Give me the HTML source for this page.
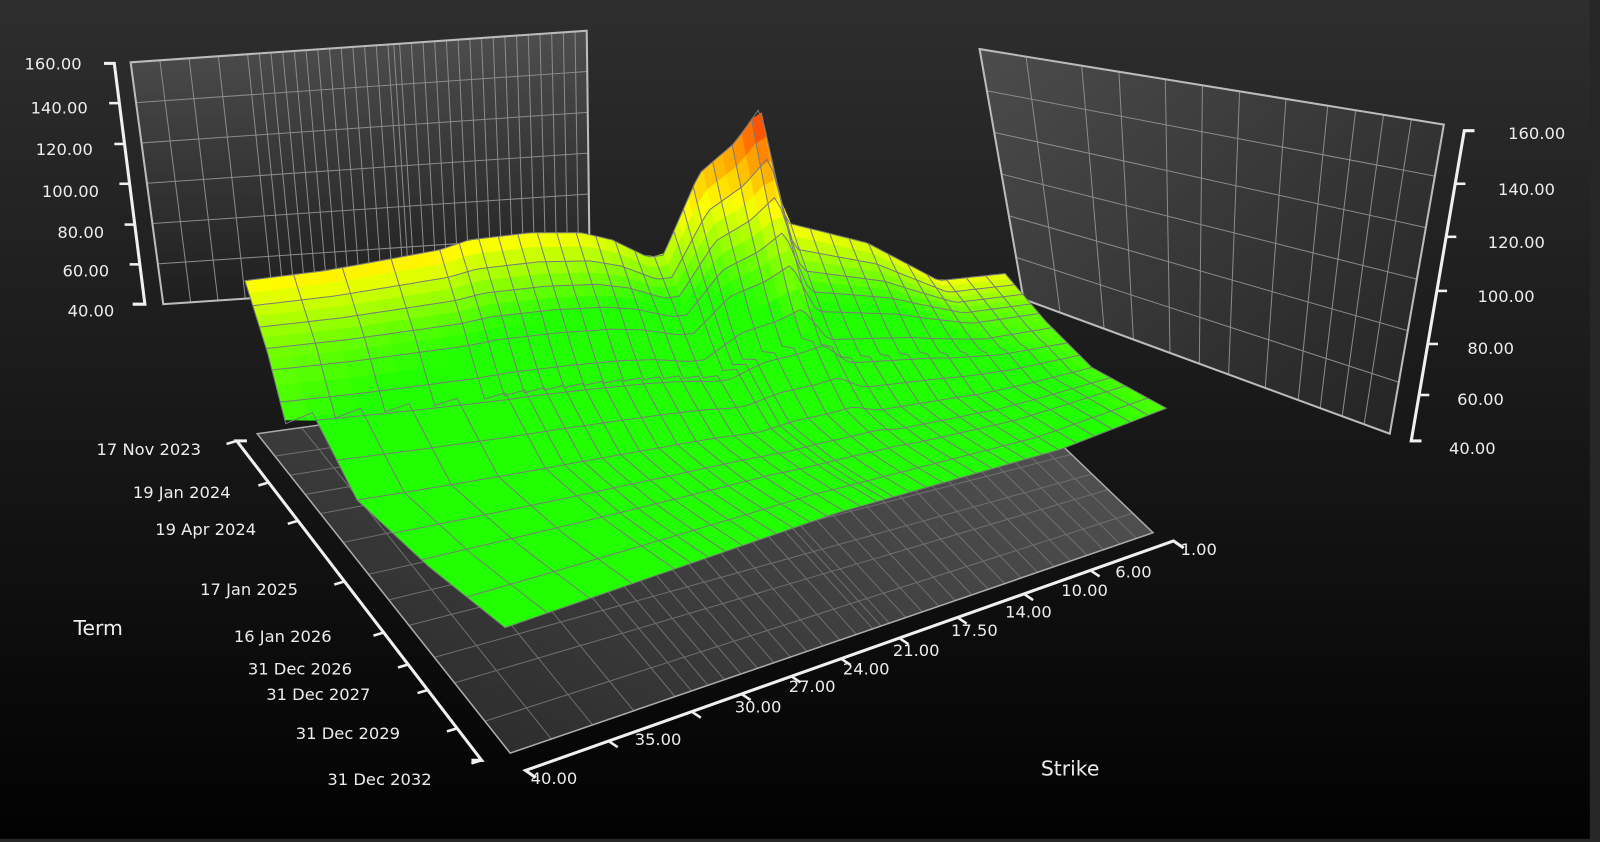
<!DOCTYPE html>
<html><head><meta charset="utf-8"><style>
html,body{margin:0;padding:0;background:#262626;width:1600px;height:842px;overflow:hidden}
svg{display:block}
text{font-family:"DejaVu Sans","Liberation Sans",sans-serif;fill:#ececec;font-size:16px}
</style></head><body>
<svg id="s" width="1600" height="842" viewBox="0 0 1568 825" xmlns="http://www.w3.org/2000/svg">
<defs>
<linearGradient id="bg" x1="0" y1="0" x2="0" y2="1"><stop offset="0" stop-color="#2e2e2e"/><stop offset="1" stop-color="#020202"/></linearGradient>
<linearGradient id="wall" x1="0" y1="0" x2="0" y2="1"><stop offset="0" stop-color="#4e4e4e"/><stop offset="1" stop-color="#1e1e1e"/></linearGradient>
<linearGradient id="wall2" x1="0" y1="0" x2="1" y2="1"><stop offset="0" stop-color="#4c4c4c"/><stop offset="1" stop-color="#222"/></linearGradient>
<linearGradient id="floor" x1="1" y1="0" x2="0" y2="1"><stop offset="0" stop-color="#5a5a5a"/><stop offset="1" stop-color="#262626"/></linearGradient>
</defs>
<rect x="0" y="0" width="1558" height="822" fill="url(#bg)"/>
<g id="walls"></g>
<g id="floorg"></g>
<g id="surf"></g>
<g id="axes" stroke="#f0f0f0" stroke-width="3" fill="none">
<polyline points="102,62 112,62 142,298 130,298"/>
<polyline points="1445,128 1435,128 1383,432 1393,432"/>
<polyline points="242,432 232,432 472,745 462,745"/>
<polyline points="525,762 515,755 1150,530 1160,537"/>
</g>
<g id="ticks" stroke="#f0f0f0" stroke-width="2.5"></g>
<text x="80" y="68" text-anchor="end">160.00</text>
<text x="86" y="111" text-anchor="end">140.00</text>
<text x="91" y="152" text-anchor="end">120.00</text>
<text x="97" y="193" text-anchor="end">100.00</text>
<text x="102" y="233" text-anchor="end">80.00</text>
<text x="107" y="271" text-anchor="end">60.00</text>
<text x="112" y="310" text-anchor="end">40.00</text>
<text x="1478" y="136">160.00</text>
<text x="1468" y="191">140.00</text>
<text x="1458" y="243">120.00</text>
<text x="1448" y="296">100.00</text>
<text x="1438" y="347">80.00</text>
<text x="1428" y="397">60.00</text>
<text x="1420" y="445">40.00</text>
<text x="197" y="446" text-anchor="end">17 Nov 2023</text>
<text x="226" y="488" text-anchor="end">19 Jan 2024</text>
<text x="251" y="524" text-anchor="end">19 Apr 2024</text>
<text x="292" y="583" text-anchor="end">17 Jan 2025</text>
<text x="325" y="629" text-anchor="end">16 Jan 2026</text>
<text x="345" y="661" text-anchor="end">31 Dec 2026</text>
<text x="363" y="686" text-anchor="end">31 Dec 2027</text>
<text x="392" y="724" text-anchor="end">31 Dec 2029</text>
<text x="423" y="769" text-anchor="end">31 Dec 2032</text>
<text x="72" y="622" style="font-size:20px">Term</text>
<text x="520" y="768">40.00</text>
<text x="622" y="730">35.00</text>
<text x="720" y="698">30.00</text>
<text x="773" y="678">27.00</text>
<text x="826" y="661">24.00</text>
<text x="875" y="643">21.00</text>
<text x="932" y="623">17.50</text>
<text x="985" y="605">14.00</text>
<text x="1040" y="584">10.00</text>
<text x="1093" y="566">6.00</text>
<text x="1157" y="544">1.00</text>
<text x="1020" y="760" style="font-size:20px">Strike</text>
</svg>
<script>
const NS="http://www.w3.org/2000/svg";
function el(p,t,a){const e=document.createElementNS(NS,t);for(const k in a)e.setAttribute(k,a[k]);p.appendChild(e);return e;}
function bil(q,u,v){const[a,b,c,d]=q;
const x=(1-u)*(1-v)*a[0]+u*(1-v)*b[0]+u*v*c[0]+(1-u)*v*d[0];
const y=(1-u)*(1-v)*a[1]+u*(1-v)*b[1]+u*v*c[1]+(1-u)*v*d[1];return[x,y];}
const strikes=[40,37.5,35,32.5,30,29,28,27,26,25,24,23,22,21,20,19,18,17.5,17,16,15,14,13,12,11,10,9,8,7,6,5,4,3,2,1];
const U=strikes.map(s=>(40-s)/39);
const V=[0,0.07,0.13,0.19,0.25,0.34,0.44,0.52,0.6,0.7,0.78,0.9,1];
const W=document.getElementById('walls');
const LW=[[128,61],[575,30],[578,270],[160,298]];
const RW=[[960,48],[1415,122],[1362,425],[1003,293]];
el(W,'polygon',{points:LW.map(p=>p.join(',')).join(' '),fill:'url(#wall)'});
el(W,'polygon',{points:RW.map(p=>p.join(',')).join(' '),fill:'url(#wall2)'});
function gridq(g,q,us,vs,col){for(const u of us){const a=bil(q,u,0),b=bil(q,u,1);el(g,'line',{x1:a[0],y1:a[1],x2:b[0],y2:b[1],stroke:col,'stroke-width':1});}
for(const v of vs){const a=bil(q,0,v),b=bil(q,1,v);el(g,'line',{x1:a[0],y1:a[1],x2:b[0],y2:b[1],stroke:col,'stroke-width':1});}}
gridq(W,LW,U,[0,1/6,2/6,3/6,4/6,5/6,1],'#8a8a8a');
gridq(W,RW,V.map(v=>1-v),[0,1/6,2/6,3/6,4/6,5/6,1],'#8a8a8a');
el(W,'polygon',{points:LW.map(p=>p.join(',')).join(' '),fill:'none',stroke:'#bbb','stroke-width':2});
el(W,'polygon',{points:RW.map(p=>p.join(',')).join(' '),fill:'none',stroke:'#bbb','stroke-width':2});
const F=document.getElementById('floorg');
const FQ=[[252,425],[930,330],[1130,522],[500,738]];
el(F,'polygon',{points:FQ.map(p=>p.join(',')).join(' '),fill:'url(#floor)'});
gridq(F,FQ,U,V,'#6e6e6e');
el(F,'polygon',{points:FQ.map(p=>p.join(',')).join(' '),fill:'none',stroke:'#aaa','stroke-width':1.5});
function pl(pts,t){for(let i=1;i<pts.length;i++){if(t<=pts[i][0]){const a=pts[i-1],b=pts[i];const f=(t-a[0])/(b[0]-a[0]||1);return a.slice(1).map((x,k)=>x+(b[k+1]-x)*f);}}return pts[pts.length-1].slice(1);}
const Bx=[[240,275,.62],[320,265,.65],[430,245,.65],[460,235,.63],[520,228,.62],[570,228,.6],[600,235,.56],[635,252,.5],[650,250,.5],[685,170,.72],[720,140,.82],[745,105,1],[770,218,.62],[850,238,.56],[920,275,.6],[985,268,.58]];
const B=Bx.map(p=>[(p[0]-240)/745,p[0],p[1],p[2]]);
const Fr=[[0,495,615,.12],[0.5,819,503,.12],[0.85,1040,440,.2],[1,1143,400,.32]];
const L=[[0,240,275,.62],[0.2,262,345,.5],[0.4,280,415,.38],[0.42,305,402,.3],[0.6,350,490,.18],[0.8,420,555,.13],[1,495,615,.12]];
const R=[[0,985,268,.58],[0.3,1025,315,.45],[0.6,1070,360,.36],[1,1143,400,.32]];
const P00=pl(L,0),P01=pl(L,1),P10=pl(R,0),P11=pl(R,1);
// smooth baseline back edge
function Bs(u){const b=pl(B,u);const y=P00[1]+(P10[1]-P00[1])*u-20*Math.sin(Math.PI*u);const h=P00[2]+(P10[2]-P00[2])*u;return[b[0],y,h];}
function S(u,v){const b=Bs(u),f=pl(Fr,u),l=pl(L,v),r=pl(R,v);const o=[];
for(let k=0;k<3;k++)o[k]=(1-v)*b[k]+v*f[k]+(1-u)*l[k]+u*r[k]-((1-u)*(1-v)*P00[k]+u*(1-v)*P10[k]+(1-u)*v*P01[k]+u*v*P11[k]);
const bf=pl(B,u);const dec=Math.pow(1-v,3);
o[1]+=(bf[1]-b[1])*dec;o[2]+=(bf[2]-b[2])*Math.pow(1-v,2);
const w=Math.sin(Math.PI*u)*Math.sin(Math.PI*v);o[1]+=15*w;o[2]-=0.22*w;
o[2]-=0.15*Math.min(1,v*5)*(1-v);
return o;}
function col(h){let r,g,b;if(h<=0.25){r=34;g=255;b=0;}else if(h<=0.6){const f=(h-0.25)/0.35;r=34+221*f;g=255;b=0;}else{const f=Math.min(1,(h-0.6)/0.4);r=255;g=255-215*f;b=0;}return`rgb(${r|0},${g|0},${b|0})`;}
const G=document.getElementById('surf');
const uu=[],vv=[];
for(let i=0;i<U.length-1;i++){uu.push(U[i]);uu.push((U[i]+U[i+1])/2);}uu.push(1);
for(let i=0;i<V.length-1;i++){vv.push(V[i]);vv.push((V[i]+V[i+1])/2);}vv.push(1);
for(let j=0;j<vv.length-1;j++)for(let i=0;i<uu.length-1;i++){
const a=S(uu[i],vv[j]),b=S(uu[i+1],vv[j]),c=S(uu[i+1],vv[j+1]),d=S(uu[i],vv[j+1]);
const h=(a[2]+b[2]+c[2]+d[2])/4;const cc=col(h);
el(G,'polygon',{points:[a,b,c,d].map(p=>p[0].toFixed(1)+','+p[1].toFixed(1)).join(' '),fill:cc,stroke:cc,'stroke-width':0.6});}
function line(pts){el(G,'polyline',{points:pts.map(p=>p[0].toFixed(1)+','+p[1].toFixed(1)).join(' '),fill:'none',stroke:'#7a7a7a','stroke-width':1});}
for(const u of U){const pts=[];for(let k=0;k<=40;k++)pts.push(S(u,k/40));line(pts);}
for(const v of V){const pts=[];for(let k=0;k<=120;k++)pts.push(S(k/120,v));line(pts);}
const T=document.getElementById('ticks');
const zl=[62,101,141,180,220,259,298];zl.forEach(y=>{const x=112+(y-62)*(30/236);el(T,'line',{x1:x-10,y1:y,x2:x,y2:y});});
const zr=[128,180,232,285,337,387,432];zr.forEach(y=>{const x=1435-(y-128)*(52/304);el(T,'line',{x1:x,y1:y,x2:x+10,y2:y});});
[0,0.13,0.25,0.44,0.6,0.7,0.78,0.9,1].forEach(v=>{const x=232+240*v,y=432+313*v;el(T,'line',{x1:x,y1:y,x2:x-10,y2:y+3});});
[40,35,30,27,24,21,17.5,14,10,6,1].forEach(s=>{const u=(40-s)/39;const x=515+635*u,y=755-225*u;el(T,'line',{x1:x,y1:y,x2:x+9,y2:y+6});});
</script>
</body></html>
